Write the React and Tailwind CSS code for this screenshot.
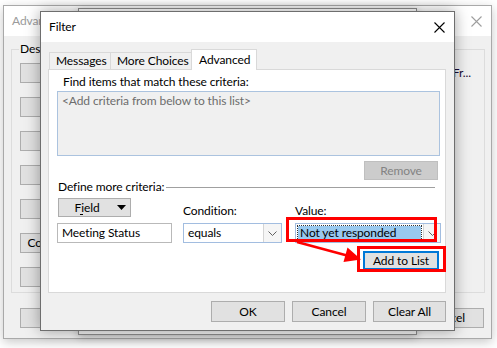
function CloseX({ color = '#000' }) {
  return (
    <svg width="11" height="11" viewBox="0 0 11 11">
      <path d="M0.5 0.5 L10.5 10.5 M10.5 0.5 L0.5 10.5" stroke={color} strokeWidth="1.1" fill="none" />
    </svg>
  )
}

function Chevron() {
  return (
    <svg width="9" height="5" viewBox="0 0 9 5">
      <polyline points="0.5,0.5 4.5,4.5 8.5,0.5" stroke="#606060" strokeWidth="1" fill="none" />
    </svg>
  )
}

function Btn({ className = '', children }) {
  return (
    <div className={`flex items-center justify-center whitespace-nowrap border border-[#adadad] bg-[#e1e1e1] text-black ${className}`}>
      {children}
    </div>
  )
}

function BackWindow() {
  const rows = ['Columns...', 'Group By...', 'Sort...', 'Filter...', 'Other Settings...', 'Conditional Formatting...', 'Format Columns...']
  return (
    <div className="absolute left-[3px] top-[5px] w-[489px] h-[334px] flex flex-col border border-[#a9a9a9] bg-[#f0f0f0] shadow-[0_3px_10px_rgba(0,0,0,0.22)]">
      <div className="h-[30px] flex items-center justify-between bg-white pl-[8px] pr-[9px]">
        <span className="text-[#9b9b9b]">Advanced View Settings: Compact</span>
        <CloseX color="#9e9e9e" />
      </div>
      <div className="flex flex-col px-[7px] pt-[5px]">
        <fieldset className="border border-[#dcdcdc] pl-[8px] pr-[13px] pb-[5px] mr-[-1px]">
          <legend className="-ml-[1px] px-[1px] leading-[16px]">Description</legend>
          <div className="flex flex-col gap-[14px] mt-[6px]">
            {rows.map((r, i) => (
              <div key={r} className="flex items-center">
                <Btn className="w-[142px] h-[20px]">{r}</Btn>
                {i === 0 && (
                  <span className="ml-auto whitespace-nowrap text-[#1a0b33]">Fr...</span>
                )}
              </div>
            ))}
          </div>
        </fieldset>
        <div className="flex items-center mt-[15px] pl-[9px]">
          <Btn className="w-[142px] h-[20px]">Reset Current View</Btn>
          <div className="ml-auto flex gap-[7px]">
            <Btn className="w-[73px] h-[20px]">OK</Btn>
            <Btn className="w-[73px] h-[20px]">Cancel</Btn>
          </div>
        </div>
      </div>
    </div>
  )
}

function MiddleWindow() {
  return (
    <div className="absolute left-[78px] top-[8px] w-[339px] h-[327px] border border-[#8c8c8c] bg-[#f0f0f0] shadow-[0_2px_8px_rgba(0,0,0,0.25)]">
      <div className="h-[30px] bg-white" />
    </div>
  )
}

function FilterDialog() {
  return (
    <div className="absolute left-[40px] top-[11px] w-[415px] h-[320px] flex flex-col border border-[#6e6e6e] bg-[#f0f0f0] shadow-[0_0_14px_rgba(0,0,0,0.35)]">
      <div className="h-[30px] flex items-center justify-between bg-white pl-[8px] pr-[9px]">
        <span className="text-black">Filter</span>
        <CloseX />
      </div>

      <div className="flex flex-col pt-[7px] pl-[7px] pr-[8px]">
        {/* tabs */}
        <div className="flex items-end h-[20px] pl-[1px] whitespace-nowrap">
          <div className="h-[17px] w-[62px] border-l border-t border-r border-[#d9d9d9] flex items-center pl-[6px]">Messages</div>
          <div className="h-[17px] w-[81px] border-t border-r border-[#d9d9d9] flex items-center pl-[6px]">More Choices</div>
          <div className="relative z-10 -ml-[1px] -mb-[1px] h-[21px] w-[66px] border-l border-t border-r border-[#d9d9d9] bg-white flex items-center pl-[7px]">Advanced</div>
        </div>

        {/* panel */}
        <div className="h-[224px] w-[398px] border border-[#d9d9d9] bg-white flex flex-col">
          <div className="mt-[4px] pl-[14px] leading-[16px]">Find items that match these criteria:</div>
          <div className="mt-[1px] ml-[8px] w-[383px] h-[65px] border border-[#abc3df] bg-[#f0f0f0] pl-[4px] pt-[1px] text-[#6d6d6d] leading-[16px]">
            &lt;Add criteria from below to this list&gt;
          </div>
          <div className="self-end mr-[7px] mt-[5px] w-[74px] h-[19px] flex items-center justify-center border border-[#bfbfbf] bg-[#cccccc] text-[#838383]">
            Remove
          </div>
          <div className="flex items-center pl-[9px] pr-[10px] leading-[14px]">
            <span className="whitespace-nowrap">Define more criteria:</span>
            <div className="flex-1 ml-[2px] h-[1px] bg-[#a0a0a0]" />
          </div>

          <div className="flex items-end h-[20px] mt-[4px] pl-[8px]">
            <div className="w-[115px] self-start">
              <Btn className="ml-[1px] w-[73px] h-[19px] gap-[17px] pl-[11px]">
                <span className="relative leading-[14px]">
                  Field
                  <span className="absolute left-[6px] top-[13px] w-[3px] h-[1px] bg-black" />
                </span>
                <svg width="9" height="5" viewBox="0 0 9 5">
                  <polygon points="0,0 9,0 4.5,5" fill="#000" />
                </svg>
              </Btn>
            </div>
            <div className="ml-[11px] w-[99px] leading-[15px]">Condition:</div>
            <div className="ml-[13px] w-[146px] leading-[15px]">Value:</div>
          </div>

          <div className="flex mt-[5px] pl-[8px]">
            <div className="w-[115px] h-[20px] border border-[#b9b9b9] bg-white flex items-center pl-[4px]">
              Meeting Status
            </div>
            <div className="ml-[11px] w-[99px] h-[20px] border border-[#a2bde0] bg-white flex">
              <span className="flex-1 flex items-center pl-[4px]">equals</span>
              <span className="w-[18px] flex items-center justify-center border-l border-[#d4d4d4] bg-[#f5f5f5]">
                <Chevron />
              </span>
            </div>
            <div className="ml-[13px] w-[146px] h-[20px] border border-[#a2bde0] bg-white flex">
              <span className="flex-1 flex items-center p-[2px]">
                <span className="flex-1 h-full flex items-center bg-[#99c9ef] outline outline-1 outline-dotted outline-[#333] pl-[2px]">
                  Not yet responded
                </span>
              </span>
              <span className="w-[17px] flex items-center justify-center border-l border-[#d4d4d4] bg-[#f5f5f5]">
                <Chevron />
              </span>
            </div>
          </div>

          <div className="self-end mr-[6px] mt-[8px] w-[76px] h-[19px] flex items-center justify-center border-2 border-[#0078d7] bg-[#e1e1e1]">
            Add to List
          </div>
        </div>

        {/* bottom buttons */}
        <div className="flex justify-end gap-[7px] mt-[8px]">
          <Btn className="w-[74px] h-[21px]">OK</Btn>
          <Btn className="w-[74px] h-[21px]">Cancel</Btn>
          <Btn className="w-[73px] h-[21px]">Clear All</Btn>
        </div>
      </div>
    </div>
  )
}

export default function App() {
  return (
    <div className="relative w-[497px] h-[348px] overflow-hidden bg-white font-['Lato',sans-serif] text-[12px] tracking-[-0.1px] text-black">
      <BackWindow />
      <MiddleWindow />
      <FilterDialog />
      <svg className="absolute left-0 top-0 pointer-events-none" width="497" height="348" viewBox="0 0 497 348">
        <rect x="287.5" y="218.5" width="148" height="22" fill="none" stroke="#ff0000" strokeWidth="3" />
        <rect x="358.5" y="247.5" width="86" height="23" fill="none" stroke="#ff0000" strokeWidth="3" />
        <line x1="297" y1="242" x2="347" y2="255.5" stroke="#ff0000" strokeWidth="2.5" />
        <polygon points="361,259.5 347.5,247.5 343.5,262" fill="#ff0000" />
      </svg>
    </div>
  )
}
